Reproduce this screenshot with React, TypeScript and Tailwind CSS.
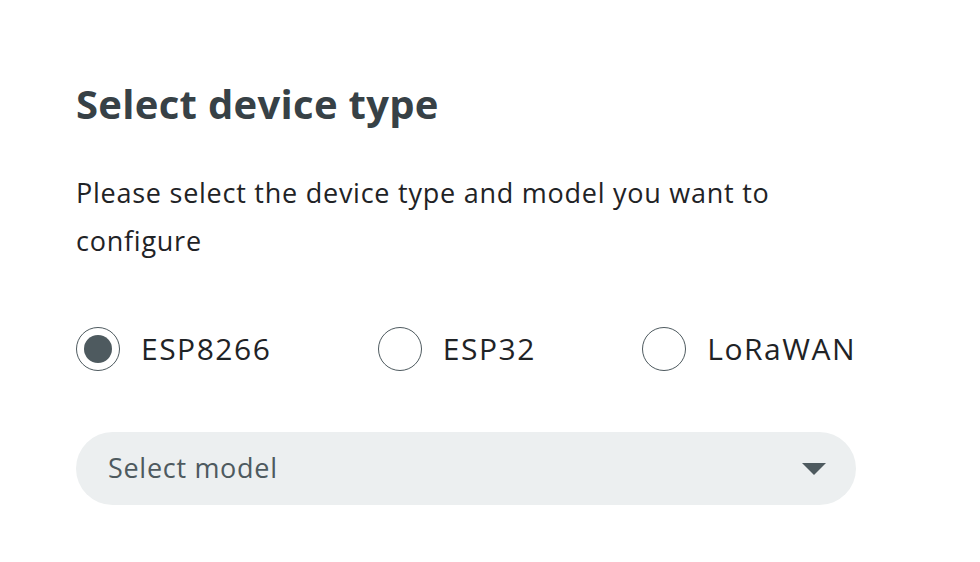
import { useState } from 'react';

const types = ['ESP8266', 'ESP32', 'LoRaWAN'];

function Radio({ checked }: { checked: boolean }) {
  return (
    <span className="flex h-[44px] w-[44px] shrink-0 items-center justify-center rounded-full border-[1.5px] border-[#4e5a5f] bg-white">
      {checked && <span className="h-[28px] w-[28px] rounded-full bg-[#4e5a5f]" />}
    </span>
  );
}

export default function App() {
  const [selected, setSelected] = useState('ESP8266');

  return (
    <div className="min-h-screen bg-white font-['Open_Sans',sans-serif]">
      <div className="w-[780px] pl-[76px] pt-[76px] box-content">
        {/* Title */}
        <h1 className="text-[40px] font-bold leading-[56px] tracking-[0.3px] text-[#374146]">Select device type</h1>

        <p className="mt-[37px] text-[27px] leading-[48px] tracking-[0.75px] text-[#1f2326]">
          Please select the device type and model you want to configure
        </p>

        {/* Device type radios */}
        <div className="mt-[62px] flex h-[44px] items-center justify-between">
          {types.map((t) => (
            <button
              key={t}
              onClick={() => setSelected(t)}
              className="flex items-center gap-[21px]"
            >
              <Radio checked={selected === t} />
              <span className="text-[30px] leading-[44px] tracking-[1.5px] text-[#1f2326]">{t}</span>
            </button>
          ))}
        </div>

        {/* Model select */}
        <button className="mt-[61px] flex h-[73px] w-full items-center justify-between rounded-full bg-[#eceff0] pl-[32px] pr-[30px]">
          <span className="text-[27px] tracking-[0.7px] text-[#4e5a5f]">Select model</span>
          <svg width="24" height="12" viewBox="0 0 24 12">
            <path d="M0 0h24L12 12z" fill="#4e5a5f" />
          </svg>
        </button>
      </div>
    </div>
  );
}
